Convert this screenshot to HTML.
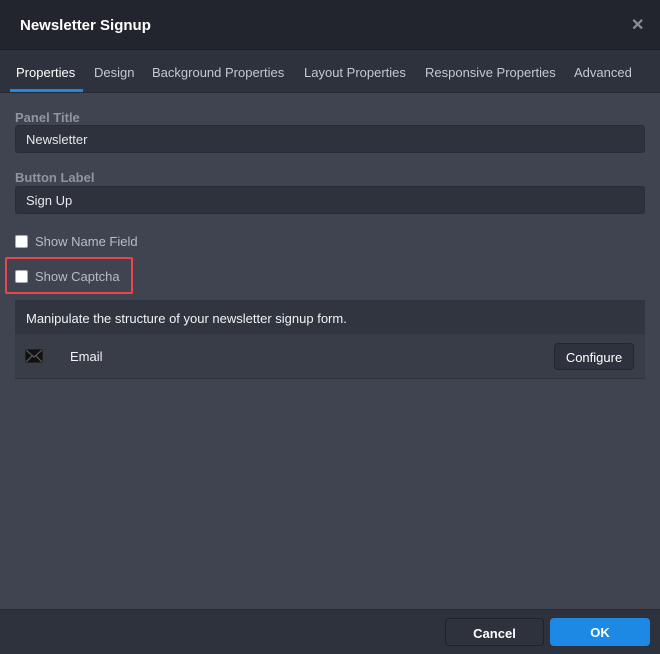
<!DOCTYPE html>
<html><head><style>
*{box-sizing:border-box;margin:0;padding:0}
body{width:660px;height:654px;background:#3f4450;font-family:"Liberation Sans",sans-serif;position:relative;overflow:hidden;color:#e6e8ec}
.a{position:absolute}
.hdr{left:0;top:0;width:660px;height:50px;background:#22252d;border-bottom:1px solid #1a1c22}
.tabs{left:0;top:50px;width:660px;height:43px;background:#2e323c;border-bottom:1px solid #262930}
.tab{top:65px;font-size:13px;color:#c4c8d0}
.lbl{font-size:13px;color:#8e94a0;font-weight:bold;left:15px}
.inp{left:15px;width:630px;height:28px;background:#2e323c;border:1px solid #292c34;border-radius:3px;font-size:13px;color:#e6e8ec;padding:6px 0 0 10px}
.cb{left:15px;width:13px;height:13px;background:#fff;border:1px solid #aaa;border-radius:2px}
.cbl{left:35px;font-size:13px;color:#b8bcc4}
.btn{border-radius:4px;font-size:13px;font-weight:bold;text-align:center;color:#fff}
</style></head><body>
<div class="a hdr"></div>
<div class="a" style="left:20px;top:17px;font-size:15px;font-weight:bold;color:#fff">Newsletter Signup</div>
<div class="a" style="left:631px;top:15px;font-size:16px;font-weight:bold;color:#8a8e96">✕</div>
<div class="a tabs"></div>
<div class="a tab" style="left:16px;color:#fff">Properties</div>
<div class="a" style="left:10px;top:89px;width:73px;height:3px;background:#1e88e5"></div>
<div class="a tab" style="left:94px">Design</div>
<div class="a tab" style="left:152px">Background Properties</div>
<div class="a tab" style="left:304px">Layout Properties</div>
<div class="a tab" style="left:425px">Responsive Properties</div>
<div class="a tab" style="left:574px">Advanced</div>
<div class="a lbl" style="top:110px">Panel Title</div>
<div class="a inp" style="top:125px">Newsletter</div>
<div class="a lbl" style="top:170px">Button Label</div>
<div class="a inp" style="top:186px">Sign Up</div>
<div class="a cb" style="top:235px"></div>
<div class="a cbl" style="top:234px">Show Name Field</div>
<div class="a" style="left:5px;top:257px;width:128px;height:37px;border:2px solid #e8474b;border-radius:2px"></div>
<div class="a cb" style="top:270px"></div>
<div class="a cbl" style="top:269px">Show Captcha</div>
<div class="a" style="left:15px;top:300px;width:630px;height:79px;background:#393d48;border-bottom:1px solid #2e323a"></div>
<div class="a" style="left:15px;top:300px;width:630px;height:34px;background:#31353f"></div>
<div class="a" style="left:26px;top:311px;font-size:13px;color:#f0f2f4">Manipulate the structure of your newsletter signup form.</div>
<svg class="a" style="left:25px;top:349px" width="18" height="14" viewBox="0 0 18 14"><rect x="0.5" y="0.5" width="17" height="13" fill="#111" stroke="#222"/><path d="M1 1 L9 8 L17 1 M1 13 L7 7 M17 13 L11 7" stroke="#555" stroke-width="1.3" fill="none"/></svg>
<div class="a" style="left:70px;top:349px;font-size:13px;color:#f0f2f4">Email</div>
<div class="a btn" style="left:554px;top:343px;width:80px;height:27px;background:#2e323c;border:1px solid #23262d;font-weight:normal;padding-top:6px">Configure</div>
<div class="a" style="left:0;top:609px;width:660px;height:45px;background:#2e323c;border-top:1px solid #262930"></div>
<div class="a btn" style="left:445px;top:618px;width:99px;height:28px;background:#2e323c;border:1px solid #1f2228;padding-top:7px">Cancel</div>
<div class="a btn" style="left:550px;top:618px;width:100px;height:28px;background:#1e88e5;padding-top:7px">OK</div>
</body></html>
